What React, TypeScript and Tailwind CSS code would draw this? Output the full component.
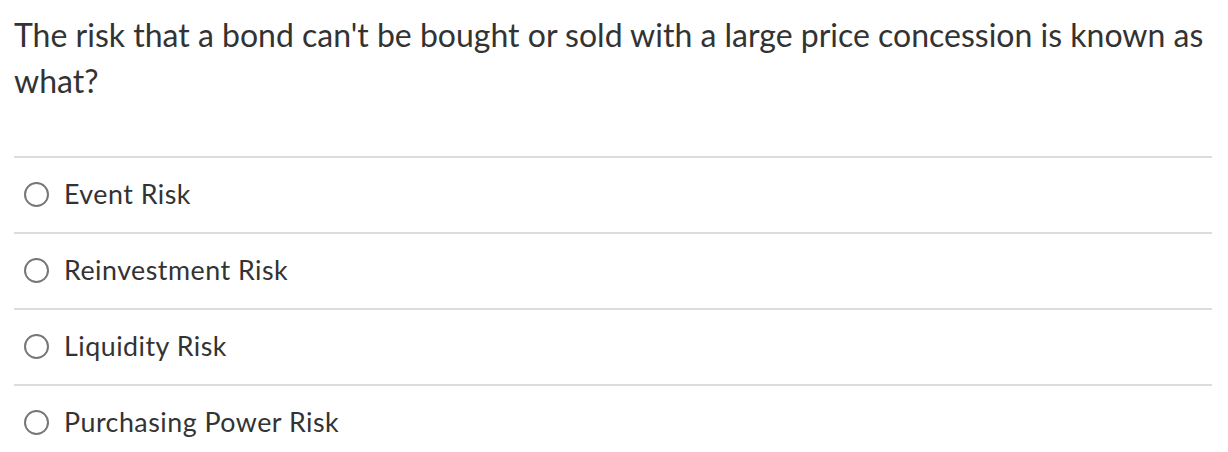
const options = ['Event Risk', 'Reinvestment Risk', 'Liquidity Risk', 'Purchasing Power Risk'];

export default function App() {
  return (
    <div className="w-[1228px] h-[452px] bg-white pl-[14px] pt-[12px] text-[#333333]" style={{ fontFamily: 'Lato, "Open Sans", sans-serif' }}>
      <p className="w-[1206px] text-[32px] leading-[46px]">
        The risk that a bond can't be bought or sold with a large price concession is known as what?
      </p>
      <div className="mt-[52px] w-[1198px]">
        {options.map((opt) => (
          <label key={opt} className="flex h-[76px] items-center border-t-2 border-[#dcdcdc] pb-[2px] pl-[10px]">
            <span className="h-[25px] w-[25px] rounded-full border-2 border-[#777777]" />
            <span className="ml-[15px] text-[26.8px] tracking-[0.5px]">{opt}</span>
          </label>
        ))}
      </div>
    </div>
  );
}
